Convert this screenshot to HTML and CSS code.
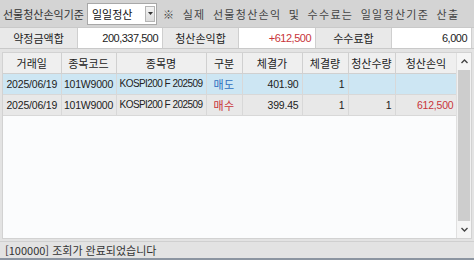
FILE: index.html
```html
<!DOCTYPE html>
<html lang="ko">
<head>
<meta charset="utf-8">
<link rel="stylesheet" href="styles.css">
</head>
<body>
<div class="win">
  <div class="top">
    <span class="lbl">선물청산손익기준</span>
    <div class="combo"><span class="combo-text">일일정산</span><span class="combo-btn"><svg width="5" height="3" viewBox="0 0 5 3"><path d="M0 0H5L2.5 3Z" fill="#333"/></svg></span></div>
    <span class="note">※ 실제 선물청산손익 및 수수료는 일일정산기준 산출</span>
  </div>
  <div class="sum">
    <div class="sc h w78">약정금액합</div>
    <div class="sc v w85">200,337,500</div>
    <div class="sc h w76">청산손익합</div>
    <div class="sc v w77 red">+612,500</div>
    <div class="sc h w76">수수료합</div>
    <div class="sc v w80">6,000</div>
  </div>
  <div class="grid">
    <div class="tablearea">
      <table>
        <colgroup>
          <col class="c1"><col class="c2"><col class="c3"><col class="c4"><col class="c5"><col class="c6"><col class="c7"><col class="c8">
        </colgroup>
        <thead>
          <tr><th>거래일</th><th>종목코드</th><th>종목명</th><th>구분</th><th>체결가</th><th>체결량</th><th>청산수량</th><th>청산손익</th></tr>
        </thead>
        <tbody>
          <tr class="sel"><td class="ctr">2025/06/19</td><td class="ctr">101W9000</td><td class="ctr nm">KOSPI200 F 202509</td><td class="ctr ko blue">매도</td><td class="num">401.90</td><td class="num">1</td><td class="num"></td><td class="num"></td></tr>
          <tr class="alt"><td class="ctr">2025/06/19</td><td class="ctr">101W9000</td><td class="ctr nm">KOSPI200 F 202509</td><td class="ctr ko red">매수</td><td class="num">399.45</td><td class="num">1</td><td class="num">1</td><td class="num red">612,500</td></tr>
        </tbody>
      </table>
    </div>
    <div class="vscroll">
      <div class="arrow"><svg width="7" height="5" viewBox="0 0 7 5"><path d="M0.5 4L3.5 1L6.5 4" fill="none" stroke="#444" stroke-width="1.4"/></svg></div>
      <div class="thumb"></div>
      <div class="arrow"><svg width="7" height="5" viewBox="0 0 7 5"><path d="M0.5 1L3.5 4L6.5 1" fill="none" stroke="#444" stroke-width="1.4"/></svg></div>
    </div>
  </div>
  <div class="status">[100000] 조회가 완료되었습니다</div>
</div>
</body>
</html>
```
FILE: styles.css
```css
* { box-sizing: border-box; }
html, body { margin: 0; padding: 0; }
body {
  width: 474px; height: 260px; overflow: hidden;
  font-family: "Noto Sans CJK KR", "DejaVu Sans", sans-serif;
  font-size: 11px; color: #222;
  background: #e3e3e3;
}
.win { width: 474px; height: 260px; display: flex; flex-direction: column; border-bottom: 3px solid #8c95a1; }
.top {
  height: 27px; background: #d4d4d4; display: flex; align-items: center;
  padding-left: 3px; flex: none;
}
.lbl { color: #333; width: 84px; }
.combo {
  width: 70px; height: 22px; background: #fff; border: 1px solid #a8a8a8;
  display: flex; align-items: stretch; margin-right: 6px;
}
.combo-text { flex: 1; padding-left: 4px; line-height: 20px; color: #111; }
.combo-btn {
  width: 10px; margin: 2px 1px 2px 0; background: linear-gradient(#f4f4f4, #dcdcdc);
  border: 1px solid #b5b5b5; display: flex; align-items: center; justify-content: center;
}
.note { color: #444; letter-spacing: 1.3px; word-spacing: 3px; white-space: nowrap; }
.sum { display: flex; height: 22px; flex: none; border-top: 1px solid #c9c9c9; border-bottom: 1px solid #c9c9c9; }
.sc { height: 100%; line-height: 20px; border-right: 1px solid #cfcfcf; }
.sc.h { background: #e9e9e9; text-align: center; color: #222; }
.sc.v {
  background: #fff; text-align: right; padding-right: 4px;
  font-family: "Liberation Sans", "Noto Sans CJK KR", sans-serif; font-size: 11px; letter-spacing: -0.5px;
}
.w78 { width: 78px; } .w85 { width: 85px; } .w76 { width: 76px; } .w77 { width: 77px; } .w80 { width: 80px; }
.red { color: #c8343a; }
.blue { color: #2f6fc0; }
.grid {
  flex: none; height: 187px; margin: 3px 2px 0 2px; display: flex;
  background: #fbfcfd; border: 1px solid #d2d2d2;
}
.tablearea { flex: 1; overflow: hidden; }
table { border-collapse: collapse; table-layout: fixed; width: 454px; }
.c1 { width: 58px; } .c2 { width: 55px; } .c3 { width: 90px; } .c4 { width: 36px; }
.c5 { width: 60px; } .c6 { width: 46px; } .c7 { width: 47px; } .c8 { width: 62px; }
th {
  height: 20px; background: #efefef; font-weight: normal; color: #222;
  border-right: 1px solid #d0d0d0; border-bottom: 1px solid #d0d0d0; padding: 0; white-space: nowrap;
}
td {
  height: 21px; padding: 0 3px; white-space: nowrap; overflow: hidden;
  border-right: 1px solid #d8d8d8; border-bottom: 1px solid #d8d8d8;
  font-family: "Liberation Sans", "Noto Sans CJK KR", sans-serif; font-size: 10.5px; letter-spacing: -0.2px;
  color: #222;
}
td.ctr { text-align: center; padding: 0 1px; }
td.nm { font-size: 10px; letter-spacing: -0.55px; }
td.ko { font-family: "Noto Sans CJK KR", sans-serif; font-size: 11px; letter-spacing: 0.5px; }
td.num { text-align: right; padding-right: 3px; }
td.red { color: #c8343a; }
td.blue { color: #2f6fc0; }
tr.sel td { background: #cde6f3; }
tr.alt td { background: #e8e8e8; }
.vscroll { width: 15px; flex: none; display: flex; flex-direction: column; background: #f0f0f0; border-left: 1px solid #e0e0e0; }
.arrow { height: 17px; display: flex; align-items: center; justify-content: center; background: #f5f5f5; }
.thumb { flex: 1; background: #cdcdcd; margin: 0 1px; }
.status {
  flex: 1; display: flex; align-items: center; padding-left: 5px; color: #333;
  border-top: 1px solid #d0d0d0; margin-top: 2px; background: #e3e3e3;
}
```
